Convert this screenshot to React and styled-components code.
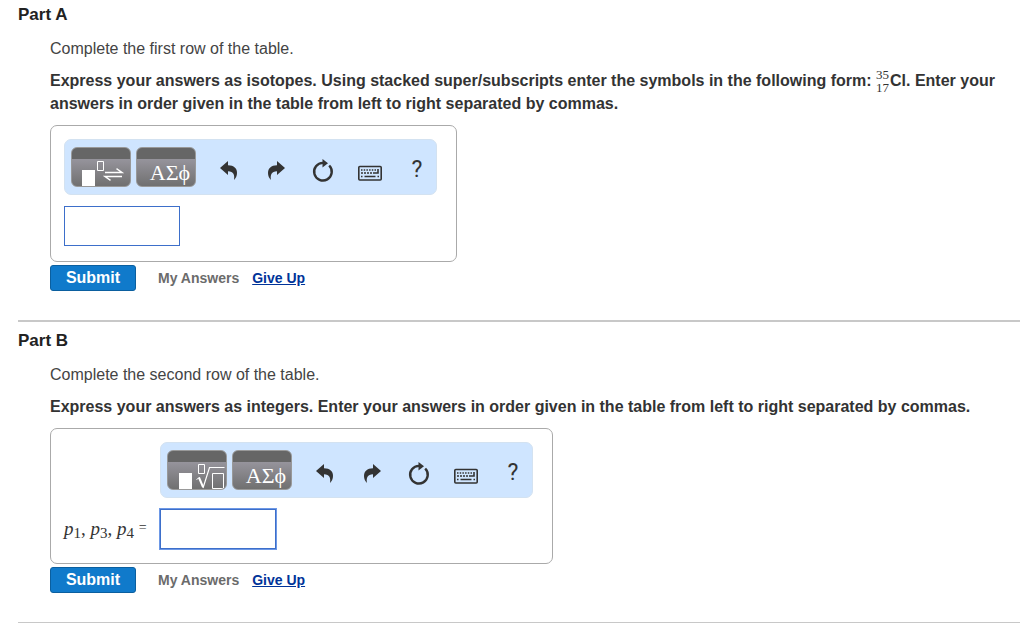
import React, { useId } from 'react'
import styled, { createGlobalStyle } from 'styled-components'

const GlobalStyle = createGlobalStyle`
  * {
    box-sizing: border-box;
  }
  body {
    margin: 0;
    background: #fff;
    color: #333;
    font-family: "Liberation Sans", Arial, sans-serif;
    font-size: 16px;
  }
`

const Page = styled.main`
  padding: 5px 4px 0 18px;
`

const Part = styled.section`
  padding-bottom: 29px;
  margin-bottom: 9px;
  border-bottom: 2px solid #c8c8c8;
`

const PartTitle = styled.h2`
  margin: 0;
  font-size: 17px;
  line-height: 20px;
  color: #222;
`

const PartBody = styled.div`
  padding-left: 32px;
`

const Prompt = styled.p`
  margin: 12px 0 9px;
  line-height: 23px;
  color: #444;
`

const Instructions = styled.p`
  margin: 0 0 10px;
  font-weight: bold;
  line-height: 23px;
`

const Stacked = styled.span`
  display: inline-flex;
  flex-direction: column;
  vertical-align: middle;
  margin: -6px 1px -4px 0;
  font-family: "Liberation Serif", serif;
  font-size: 13px;
  font-weight: normal;
  line-height: 13px;
`

const AnswerBox = styled.form`
  display: grid;
  grid-template-columns: ${(props) => (props.$labelled ? '86px auto' : 'auto')};
  column-gap: 10px;
  row-gap: 11px;
  align-items: center;
  width: fit-content;
  padding: ${(props) =>
    props.$labelled ? '13px 19px 14px 13px' : '13px 19px 15px 13px'};
  border: 1px solid #aaa;
  border-radius: 7px;
`

const Toolbar = styled.div`
  grid-column: -2;
  display: flex;
  gap: 5px;
  padding: 7px 3px 7px 6px;
  border: 1px solid #d3e2f1;
  border-radius: 7px;
  background: #cfe5ff;
`

const Tools = styled.div`
  display: flex;
  gap: 15px;
  margin-left: 12px;
`

const TemplateButton = styled.button`
  display: block;
  width: 60px;
  height: 40px;
  padding: 0;
  overflow: hidden;
  border: 1px solid #999;
  border-radius: 6px;
  background: linear-gradient(#666 0 11px, #96949c 11px, #707070);
  color: #fff;
  svg {
    display: block;
  }
`

const SymbolButton = styled(TemplateButton)`
  padding: 12px 0 0 8px;
  font-family: "Liberation Serif", serif;
  font-size: 22px;
  line-height: 26px;
`

const ToolButton = styled.button`
  display: grid;
  place-items: center;
  width: 32px;
  height: 40px;
  padding: 8px 0 0;
  border: 0;
  background: none;
  color: #333;
`

const HelpButton = styled(ToolButton)`
  padding-top: 6px;
  font-family: Roboto, sans-serif;
  font-size: 23px;
  line-height: 24px;
`

const MathLabel = styled.label`
  font-family: "Liberation Serif", serif;
  font-size: 19px;
  line-height: 24px;
  white-space: nowrap;
  sub {
    font-size: 15px;
    line-height: 0;
    vertical-align: -3px;
  }
`

const Equals = styled.span`
  font-size: 14px;
  line-height: 0;
  vertical-align: 3px;
`

const AnswerInput = styled.input`
  width: 116px;
  height: 40px;
  padding: 4px 8px;
  border: 1px solid #3d6fca;
  border-radius: 0;
  outline: none;
  background: #fff;
  font-size: 16px;
  box-shadow: ${(props) => (props.$active ? '0 0 0 1px #6d98e6' : 'none')};
`

const Actions = styled.div`
  display: flex;
  align-items: center;
  margin-top: 3px;
  font-size: 14px;
  font-weight: bold;
`

const SubmitButton = styled.button`
  width: 86px;
  height: 26px;
  padding: 0;
  border: 1px solid #0b5f9f;
  border-radius: 3px;
  background: #107acb;
  color: #fff;
  font-family: inherit;
  font-size: 16px;
  font-weight: bold;
`

const MyAnswers = styled.span`
  margin: 0 13px 0 22px;
  color: #6b6b6b;
`

const GiveUp = styled.a`
  color: #003399;
`

function ExponentArrows() {
  return (
    <svg width="58" height="38" viewBox="0 0 58 38" fill="none" stroke="#fff">
      <path d="M10 22h13v17H10z" fill="#fff" stroke="none" />
      <path d="M25.5 13.5h6v9h-6z" />
      <path d="M33 24.500h17l-5.500-3.800M50 28.500H33l5.500 3.800" strokeWidth="1.400" />
    </svg>
  )
}

function RootTemplate() {
  return (
    <svg width="58" height="38" viewBox="0 0 58 38" fill="none" stroke="#fff">
      <path d="M11 22h13v17H11z" fill="#fff" stroke="none" />
      <path d="M30.500 13.500h6v9h-6z" />
      <path d="M28.500 28.500l3-2" />
      <path d="M31 26.500l4 9.500" strokeWidth="2" />
      <path d="M35 37l6.500-20.500h15" strokeWidth="1.200" />
      <path d="M44.500 22.500h11v15h-11z" />
    </svg>
  )
}

const ARROW =
  'M3 9l8-7v4.200c6 .1 9 3 9 7.800 0 3-1.200 5.300-3 7 .9-5-.4-8.600-6-8.800V16z'

function UndoIcon() {
  return (
    <svg width="24" height="24" viewBox="0 0 24 24" fill="currentColor">
      <path d={ARROW} />
    </svg>
  )
}

function RedoIcon() {
  return (
    <svg width="24" height="24" viewBox="0 0 24 24" fill="currentColor">
      <path d={ARROW} transform="matrix(-1 0 0 1 24 0)" />
    </svg>
  )
}

function ResetIcon() {
  return (
    <svg width="24" height="24" viewBox="0 0 24 24" fill="none">
      <path
        d="M18.200 6.500A8.800 8.800 0 1 1 12 3.900"
        stroke="currentColor"
        strokeWidth="2.400"
      />
      <path d="M11.500 0l5.500 4.200-5.500 4.300z" fill="currentColor" />
    </svg>
  )
}

function KeyboardIcon() {
  return (
    <svg width="24" height="24" viewBox="0 0 24 24" fill="none" stroke="currentColor">
      <rect x=".8" y="7.500" width="22.400" height="13.500" rx="1" strokeWidth="1.600" />
      <path d="M3 11h15" strokeWidth="1.500" strokeDasharray="1.500 1.200" />
      <path d="M3 14h14" strokeWidth="1.500" strokeDasharray="2 1" />
      <path d="M20 10v4h-3" strokeWidth="1.600" />
      <path d="M3 17.500h1.500M6.500 17.500h11M19.500 17.500H21" strokeWidth="1.600" />
    </svg>
  )
}

function MathToolbar({ template }) {
  return (
    <Toolbar role="toolbar">
      <TemplateButton type="button" aria-label="Templates">
        {template}
      </TemplateButton>
      <SymbolButton type="button">ΑΣϕ</SymbolButton>
      <Tools>
        <ToolButton type="button" aria-label="Undo">
          <UndoIcon />
        </ToolButton>
        <ToolButton type="button" aria-label="Redo">
          <RedoIcon />
        </ToolButton>
        <ToolButton type="button" aria-label="Reset">
          <ResetIcon />
        </ToolButton>
        <ToolButton type="button" aria-label="Keyboard shortcuts">
          <KeyboardIcon />
        </ToolButton>
        <HelpButton type="button">?</HelpButton>
      </Tools>
    </Toolbar>
  )
}

function Question({ title, prompt, instructions, template, label, active }) {
  const id = useId()

  return (
    <Part>
      <PartTitle>{title}</PartTitle>
      <PartBody>
        <Prompt>{prompt}</Prompt>
        <Instructions>{instructions}</Instructions>
        <AnswerBox
          id={id + 'form'}
          $labelled={!!label}
          onSubmit={(e) => e.preventDefault()}
        >
          <MathToolbar template={template} />
          {label && <MathLabel htmlFor={id}>{label}</MathLabel>}
          <AnswerInput
            id={id}
            $active={active}
            aria-label={label ? undefined : title + ' answer'}
          />
        </AnswerBox>
        <Actions>
          <SubmitButton type="submit" form={id + 'form'}>
            Submit
          </SubmitButton>
          <MyAnswers>My Answers</MyAnswers>
          <GiveUp href="#">Give Up</GiveUp>
        </Actions>
      </PartBody>
    </Part>
  )
}

export default function App() {
  return (
    <Page>
      <GlobalStyle />
      <Question
        title="Part A"
        prompt="Complete the first row of the table."
        instructions={
          <>
            Express your answers as isotopes. Using stacked super/subscripts
            enter the symbols in the following form:{' '}
            <Stacked>
              <span>35</span>
              <span>17</span>
            </Stacked>
            Cl. Enter your answers in order given in the table from left to
            right separated by commas.
          </>
        }
        template={<ExponentArrows />}
      />
      <Question
        title="Part B"
        prompt="Complete the second row of the table."
        instructions="Express your answers as integers. Enter your answers in order given in the table from left to right separated by commas."
        template={<RootTemplate />}
        label={
          <>
            <i>p</i>
            <sub>1</sub>, <i>p</i>
            <sub>3</sub>, <i>p</i>
            <sub>4</sub> <Equals>=</Equals>
          </>
        }
        active
      />
    </Page>
  )
}
